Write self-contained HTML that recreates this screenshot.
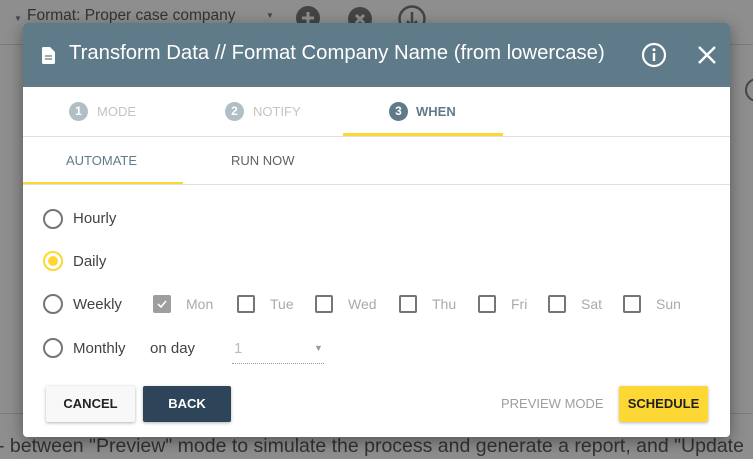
<!DOCTYPE html>
<html><head><style>
*{box-sizing:border-box;margin:0;padding:0}
body{width:753px;height:459px;overflow:hidden;background:#8e8e8e;font-family:"Liberation Sans",sans-serif;position:relative}
.a{position:absolute}
.dlg{left:23px;top:23px;width:707px;height:414px;background:#fff;border-radius:4px;overflow:hidden;box-shadow:0 4px 16px rgba(0,0,0,.4)}
.hdr{left:0;top:0;width:707px;height:64px;background:#5f7b89;color:#fff}
.t{font-size:15px;color:#424242}
.rad{width:20px;height:20px;border:2px solid #757575;border-radius:50%}
.cb{width:18px;height:18px;border:2px solid #757575;border-radius:2px}
.dl{font-size:14px;color:#aaa}
.num{width:19px;height:19px;border-radius:50%;background:#b0bec5;color:#fff;font-size:12px;font-weight:bold;text-align:center;line-height:19px}
.btn{font-size:13px;font-weight:bold;text-align:center;line-height:36px;border-radius:2px;box-shadow:0 1px 3px rgba(0,0,0,.3);height:36px;top:363px}
</style></head><body>
<div class="a" style="left:0;top:44px;width:753px;height:1px;background:#7a7a7a"></div>
<div class="a" style="left:14px;top:14px;font-size:8px;color:#444">▼</div>
<div class="a" style="left:27px;top:7px;font-size:15.5px;color:#333">Format: Proper case company</div>
<div class="a" style="left:266px;top:11px;font-size:8px;color:#444">▼</div>
<svg class="a" style="left:296px;top:6px" width="24" height="24" viewBox="0 0 24 24"><circle cx="12" cy="12" r="12" fill="#444"/><path d="M12 6v12M6 12h12" stroke="#8e8e8e" stroke-width="3"/></svg>
<svg class="a" style="left:348px;top:7px" width="24" height="24" viewBox="0 0 24 24"><circle cx="12" cy="12" r="12" fill="#444"/><path d="M8 8l8 8M16 8l-8 8" stroke="#8e8e8e" stroke-width="3"/></svg>
<svg class="a" style="left:398px;top:5px" width="28" height="28" viewBox="0 0 28 28"><circle cx="14" cy="14" r="12.5" fill="none" stroke="#444" stroke-width="2.5"/><path d="M14 7v14M9 16l5 5 5-5" stroke="#444" stroke-width="2.5" fill="none"/></svg>
<div class="a" style="left:745px;top:78px;width:24px;height:24px;border-radius:50%;border:2px solid #444"></div>
<div class="a" style="left:0;top:413px;width:753px;height:1px;background:#7a7a7a"></div>
<div class="a" style="left:-2px;top:435px;font-size:19.5px;color:#333;white-space:nowrap">- between "Preview" mode to simulate the process and generate a report, and "Update</div>

<div class="a dlg">
 <div class="a hdr">
  <svg class="a" style="left:19px;top:24px" width="13" height="17" viewBox="0 0 13 17"><path d="M0 1.5A1.5 1.5 0 0 1 1.5 0H8l5 5v10.5a1.5 1.5 0 0 1-1.5 1.5h-10A1.5 1.5 0 0 1 0 15.5z" fill="#fff"/><path d="M3 9h7M3 12h7" stroke="#5f7b89" stroke-width="1.3"/></svg>
  <div class="a" style="left:46px;top:19px;font-size:20.3px;white-space:nowrap">Transform Data // Format Company Name (from lowercase)</div>
  <svg class="a" style="left:618px;top:19px" width="26" height="26" viewBox="0 0 26 26"><circle cx="13" cy="13" r="11" fill="none" stroke="#fff" stroke-width="2.2"/><rect x="11.8" y="11" width="2.4" height="8" fill="#fff"/><circle cx="13" cy="7.8" r="1.5" fill="#fff"/></svg>
  <svg class="a" style="left:674px;top:22px" width="20" height="20" viewBox="0 0 20 20"><path d="M2 2L18 18M18 2L2 18" stroke="#fff" stroke-width="2.4"/></svg>
 </div>
 <div class="a num" style="left:46px;top:79px">1</div><div class="a" style="left:74px;top:81px;font-size:13px;color:#c4c4c4">MODE</div>
 <div class="a num" style="left:202px;top:79px">2</div><div class="a" style="left:230px;top:81px;font-size:13px;color:#c4c4c4">NOTIFY</div>
 <div class="a num" style="left:366px;top:79px;background:#5f7b89">3</div><div class="a" style="left:393px;top:81px;font-size:13px;color:#5f7b89;font-weight:bold">WHEN</div>
 <div class="a" style="left:320px;top:110px;width:160px;height:3px;background:#fdd835"></div>
 <div class="a" style="left:0;top:113px;width:707px;height:1px;background:#e0e0e0"></div>
 <div class="a" style="left:43px;top:130px;font-size:13px;color:#5f7b89">AUTOMATE</div>
 <div class="a" style="left:208px;top:130px;font-size:13px;color:#616161">RUN NOW</div>
 <div class="a" style="left:0;top:159px;width:160px;height:3px;background:#fdd835"></div>
 <div class="a" style="left:0;top:161px;width:707px;height:1px;background:#e0e0e0"></div>

 <div class="a rad" style="left:20px;top:186px"></div><div class="a t" style="left:50px;top:187px">Hourly</div>
 <div class="a rad" style="left:20px;top:228px;border-color:#fdd835"><div class="a" style="left:3px;top:3px;width:10px;height:10px;border-radius:50%;background:#fdd835"></div></div><div class="a t" style="left:50px;top:230px">Daily</div>
 <div class="a rad" style="left:20px;top:271px"></div><div class="a t" style="left:50px;top:273px">Weekly</div>
 <div class="a cb" style="left:130px;top:272px;background:#9e9e9e;border-color:#9e9e9e"><svg class="a" style="left:1px;top:1px" width="12" height="12" viewBox="0 0 12 12"><path d="M2 6l3 3 5-6" stroke="#fff" stroke-width="1.6" fill="none"/></svg></div><div class="a dl" style="left:163px;top:273px">Mon</div>
 <div class="a cb" style="left:214px;top:272px"></div><div class="a dl" style="left:247px;top:273px">Tue</div>
 <div class="a cb" style="left:292px;top:272px"></div><div class="a dl" style="left:325px;top:273px">Wed</div>
 <div class="a cb" style="left:376px;top:272px"></div><div class="a dl" style="left:409px;top:273px">Thu</div>
 <div class="a cb" style="left:455px;top:272px"></div><div class="a dl" style="left:488px;top:273px">Fri</div>
 <div class="a cb" style="left:525px;top:272px"></div><div class="a dl" style="left:558px;top:273px">Sat</div>
 <div class="a cb" style="left:600px;top:272px"></div><div class="a dl" style="left:633px;top:273px">Sun</div>
 <div class="a rad" style="left:20px;top:315px"></div><div class="a t" style="left:50px;top:317px">Monthly</div>
 <div class="a t" style="left:127px;top:317px">on day</div>
 <div class="a" style="left:211px;top:317px;font-size:15px;color:#bbb">1</div>
 <div class="a" style="left:291px;top:320px;font-size:9px;color:#999">▼</div>
 <div class="a" style="left:209px;top:340px;width:92px;border-top:1px dotted #999"></div>

 <div class="a btn" style="left:23px;width:89px;background:#f8f8f8;color:#222">CANCEL</div>
 <div class="a btn" style="left:120px;width:88px;background:#2e4559;color:#fff">BACK</div>
 <div class="a" style="left:478px;top:373px;font-size:13px;color:#9e9e9e">PREVIEW MODE</div>
 <div class="a btn" style="left:596px;width:89px;background:#fdd835;color:#222">SCHEDULE</div>
</div>
</body></html>
